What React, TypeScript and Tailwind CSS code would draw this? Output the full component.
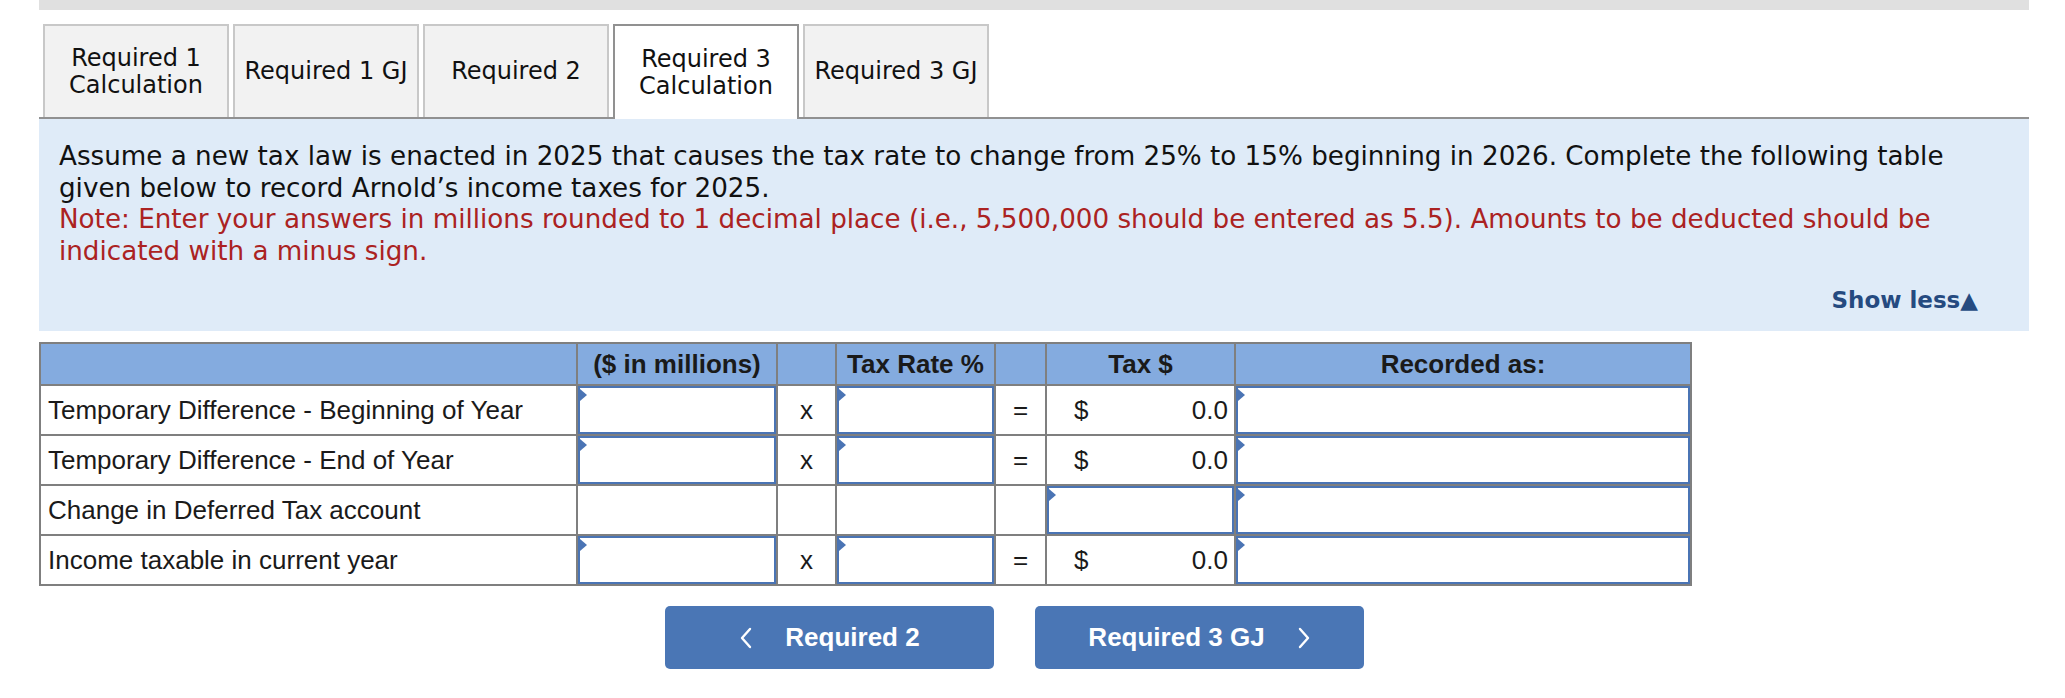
import React from 'react';

const verdana = { fontFamily: '"DejaVu Sans", Verdana, sans-serif' };

const tabs = [
    { label: ['Required 1', 'Calculation'], active: false },
    { label: ['Required 1 GJ'], active: false },
    { label: ['Required 2'], active: false },
    { label: ['Required 3', 'Calculation'], active: true },
    { label: ['Required 3 GJ'], active: false },
];

const Marker = () => (
    <span className="absolute left-0 top-[1px] w-0 h-0 border-t-[6px] border-b-[6px] border-l-[7px] border-t-transparent border-b-transparent border-l-[#4a74b4]" />
);

const AnswerBox = () => (
    <div className="relative h-[48px] border-2 border-[#4a74b4] bg-white">
        <Marker />
    </div>
);

const TaxCell = () => (
    <div className="flex items-center justify-between h-[48px] pl-[27px] pr-[6px]">
        <span>$</span>
        <span>0.0</span>
    </div>
);

type Row = { label: string; full: boolean };

const rows: Row[] = [
    { label: 'Temporary Difference - Beginning of Year', full: true },
    { label: 'Temporary Difference - End of Year', full: true },
    { label: 'Change in Deferred Tax account', full: false },
    { label: 'Income taxable in current year', full: true },
];

const Chevron = ({ dir }: { dir: 'left' | 'right' }) => (
    <svg width="14" height="24" viewBox="0 0 14 24" fill="none" stroke="white" strokeWidth="2.4" strokeLinecap="round" strokeLinejoin="round">
        {dir === 'left' ? <polyline points="11,3 3,12 11,21" /> : <polyline points="3,3 11,12 3,21" />}
    </svg>
);

export default function App() {
    return (
        <div className="w-[2065px] h-[698px] bg-white overflow-hidden">
            <div className="ml-[39px] w-[1990px]">
                <div className="h-[10px] bg-[#e0e0e0]" />

                {/* tabs */}
                <div className="mt-[14px] flex gap-[4px] pl-[4px] border-b-2 border-[#919191]" style={verdana}>
                    {tabs.map((t, i) => (
                        <div
                            key={i}
                            className={
                                t.active
                                    ? 'w-[186px] h-[95px] -mb-[2px] flex flex-col items-center justify-center bg-white border-2 border-b-0 border-[#919191] text-[24px] leading-[27px] text-[#111]'
                                    : 'w-[186px] h-[93px] flex flex-col items-center justify-center bg-[#f2f2f2] border-2 border-b-0 border-[#c8c8c8] text-[24px] leading-[27px] text-[#111]'
                            }
                        >
                            {t.label.map(l => (
                                <span key={l}>{l}</span>
                            ))}
                        </div>
                    ))}
                </div>

                {/* instructions */}
                <div className="bg-[#dfebf8] pt-[22px] pb-[16px] pl-[20px] pr-[40px]" style={verdana}>
                    <p className="text-[26.2px] leading-[31.5px] text-[#111]">
                        Assume a new tax law is enacted in 2025 that causes the tax rate to change from 25% to 15% beginning in 2026. Complete the following table given below to record Arnold’s income taxes for 2025.
                    </p>
                    <p className="text-[26.2px] leading-[31.5px] text-[#ab2222]">
                        Note: Enter your answers in millions rounded to 1 decimal place (i.e., 5,500,000 should be entered as 5.5). Amounts to be deducted should be indicated with a minus sign.
                    </p>
                    <div className="mt-[18px] flex justify-end pr-[11px]">
                        <span className="text-[23px] leading-[30px] font-bold text-[#254a80]">Show less▲</span>
                    </div>
                </div>

                {/* table */}
                <table
                    className="mt-[11px] border-collapse table-fixed w-[1651px] text-[26px] text-[#1a1a1a]"
                    style={{ fontFamily: '"Liberation Sans", Arial, sans-serif' }}
                >
                    <colgroup>
                        <col className="w-[537px]" />
                        <col className="w-[200px]" />
                        <col className="w-[59px]" />
                        <col className="w-[159px]" />
                        <col className="w-[51px]" />
                        <col className="w-[189px]" />
                        <col className="w-[456px]" />
                    </colgroup>
                    <thead>
                        <tr className="bg-[#84abdf] h-[42px] font-bold">
                            <th className="border-2 border-[#7f7f7f]" />
                            <th className="border-2 border-[#7f7f7f] font-bold">($ in millions)</th>
                            <th className="border-2 border-[#7f7f7f]" />
                            <th className="border-2 border-[#7f7f7f] font-bold">Tax Rate %</th>
                            <th className="border-2 border-[#7f7f7f]" />
                            <th className="border-2 border-[#7f7f7f] font-bold">Tax $</th>
                            <th className="border-2 border-[#7f7f7f] font-bold">Recorded as:</th>
                        </tr>
                    </thead>
                    <tbody>
                        {rows.map(r => (
                            <tr key={r.label} className="h-[50px]">
                                <td className="border-2 border-[#7f7f7f] pl-[7px] whitespace-nowrap">{r.label}</td>
                                <td className="border-2 border-[#7f7f7f] p-0">{r.full && <AnswerBox />}</td>
                                <td className="border-2 border-[#7f7f7f] text-center">{r.full && 'x'}</td>
                                <td className="border-2 border-[#7f7f7f] p-0">{r.full && <AnswerBox />}</td>
                                <td className="border-2 border-[#7f7f7f] text-center">{r.full && '='}</td>
                                <td className="border-2 border-[#7f7f7f] p-0">{r.full ? <TaxCell /> : <AnswerBox />}</td>
                                <td className="border-2 border-[#7f7f7f] p-0"><AnswerBox /></td>
                            </tr>
                        ))}
                    </tbody>
                </table>

                {/* nav buttons */}
                <div className="mt-[20px] ml-[626px] flex gap-[41px]" style={{ fontFamily: '"Liberation Sans", Arial, sans-serif' }}>
                    <button className="w-[329px] h-[63px] rounded-[5px] bg-[#4a76b5] text-white text-[26px] font-bold flex items-center justify-center gap-[32px]">
                        <Chevron dir="left" />
                        <span>Required 2</span>
                    </button>
                    <button className="w-[329px] h-[63px] rounded-[5px] bg-[#4a76b5] text-white text-[26px] font-bold flex items-center justify-center gap-[32px]">
                        <span>Required 3 GJ</span>
                        <Chevron dir="right" />
                    </button>
                </div>
            </div>
        </div>
    );
}
